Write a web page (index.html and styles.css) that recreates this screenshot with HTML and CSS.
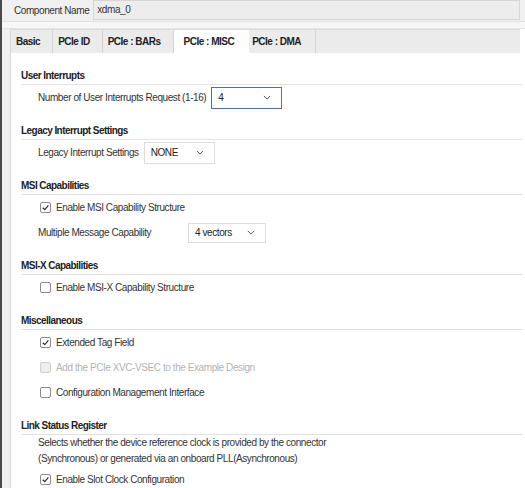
FILE: index.html
```html
<!DOCTYPE html>
<html>
<head>
<meta charset="utf-8">
<link rel="stylesheet" href="styles.css">
</head>
<body>
<div class="frame">
  <div class="name-row">
    <span class="name-label">Component Name</span>
    <div class="name-input">xdma_0</div>
  </div>
  <div class="band"></div>
  <div class="panel">
    <div class="tabs">
      <div class="tab">Basic</div>
      <div class="tab">PCIe ID</div>
      <div class="tab">PCIe : BARs</div>
      <div class="tab active">PCIe : MISC</div>
      <div class="tab">PCIe : DMA</div>
    </div>
    <div class="content">
      <div class="section">
        <div class="sec-title">User Interrupts</div>
        <div class="row">
          <span class="lbl">Number of User Interrupts Request (1-16)</span>
          <div class="select focus w71"><span>4</span><svg class="chev" viewBox="0 0 10 6"><path d="M1 1 L5 5 L9 1" fill="none" stroke="#555" stroke-width="1.2"/></svg></div>
        </div>
      </div>
      <div class="section">
        <div class="sec-title">Legacy Interrupt Settings</div>
        <div class="row">
          <span class="lbl">Legacy Interrupt Settings</span>
          <div class="select w71"><span>NONE</span><svg class="chev" viewBox="0 0 10 6"><path d="M1 1 L5 5 L9 1" fill="none" stroke="#555" stroke-width="1.2"/></svg></div>
        </div>
      </div>
      <div class="section">
        <div class="sec-title">MSI Capabilities</div>
        <label class="check"><span class="box"><svg viewBox="0 0 10 10"><path d="M2 5.2 L4.2 7.4 L8.2 2.6" fill="none" stroke="#333" stroke-width="1.4"/></svg></span>Enable MSI Capability Structure</label>
        <div class="row">
          <span class="lbl fixed">Multiple Message Capability</span>
          <div class="select short w78"><span>4 vectors</span><svg class="chev" viewBox="0 0 10 6"><path d="M1 1 L5 5 L9 1" fill="none" stroke="#555" stroke-width="1.2"/></svg></div>
        </div>
      </div>
      <div class="section">
        <div class="sec-title">MSI-X Capabilities</div>
        <label class="check"><span class="box"></span>Enable MSI-X Capability Structure</label>
      </div>
      <div class="section">
        <div class="sec-title">Miscellaneous</div>
        <label class="check"><span class="box"><svg viewBox="0 0 10 10"><path d="M2 5.2 L4.2 7.4 L8.2 2.6" fill="none" stroke="#333" stroke-width="1.4"/></svg></span>Extended Tag Field</label>
        <label class="check disabled"><span class="box"></span>Add the PCIe XVC-VSEC to the Example Design</label>
        <label class="check"><span class="box"></span>Configuration Management Interface</label>
      </div>
      <div class="section">
        <div class="sec-title">Link Status Register</div>
        <p class="desc">Selects whether the device reference clock is provided by the connector<br>(Synchronous) or generated via an onboard PLL(Asynchronous)</p>
        <label class="check"><span class="box"><svg viewBox="0 0 10 10"><path d="M2 5.2 L4.2 7.4 L8.2 2.6" fill="none" stroke="#333" stroke-width="1.4"/></svg></span>Enable Slot Clock Configuration</label>
      </div>
    </div>
  </div>
</div>
</body>
</html>
```

FILE: styles.css
```css
* { box-sizing: border-box; }
html, body { margin: 0; padding: 0; }
body {
  width: 525px;
  height: 488px;
  overflow: hidden;
  font-family: "Liberation Sans", Arial, sans-serif;
  font-size: 10px;
  letter-spacing: -0.42px;
  color: #222;
  background: #fff;
}
.frame {
  height: 488px;
  border-left: 2px solid #4a4a4a;
  background: #f0f0f0;
  display: flex;
  flex-direction: column;
}
.name-row {
  display: flex;
  flex-shrink: 0;
  align-items: center;
  height: 21px;
  padding-left: 12px;
  gap: 4px;
}
.name-label { color: #333; }
.name-input {
  flex: 1;
  margin-right: 5px;
  height: 20px;
  margin-top: -2px;
  border: 1px solid #d6d6d6;
  background: #ededed;
  padding-left: 3px;
  display: flex;
  align-items: center;
  color: #333;
}
.band {
  height: 8px;
  flex-shrink: 0;
  border-top: 1px solid #e2e2e2;
  border-bottom: 1px solid #e4e4e4;
  background: #f6f6f6;
}
.panel {
  flex: 1;
  min-height: 0;
  margin-left: 8px;
  display: flex;
  flex-direction: column;
  border-left: 1px solid #d8d8d8;
  background: #fff;
}
.tabs {
  display: flex;
  height: 24px;
  flex-shrink: 0;
  background: #ebebeb;
  border-top: 1px solid #dcdcdc;
  margin-right: 5px;
}
.tab {
  font-weight: bold;
  letter-spacing: -0.5px;
  padding: 0 12px 0 5px;
  display: flex;
  align-items: center;
  border-right: 1px solid #d4d4d4;
  color: #222;
}
.tab.active {
  background: #fff;
  border-right: none;
  padding: 0 15px 0 10px;
}
.tab.active + .tab { padding-left: 3px; padding-right: 14px; }
.content {
  flex-shrink: 0;
  padding: 17px 0 0 10px;
  display: flex;
  flex-direction: column;
}
.section { display: flex; flex-direction: column; margin-bottom: 15px; flex-shrink: 0; }
.sec-title {
  font-weight: bold;
  letter-spacing: -0.55px;
  color: #222;
  line-height: 12px;
  padding-bottom: 2px;
  border-bottom: 1px solid #e2e2e2;
  margin-right: 2px;
}
.row {
  display: flex;
  flex-shrink: 0;
  align-items: center;
  padding-left: 17px;
  gap: 5px;
  height: 25px;
}
.lbl { color: #333; }
.lbl.fixed { width: 145px; }
.select {
  height: 22px;
  border: 1px solid #dcdcdc;
  display: flex;
  align-items: center;
  justify-content: space-between;
  padding: 0 10px 0 6px;
  color: #222;
  background: #fff;
}
.select.short { height: 20px; }
.select.focus { border: 1.5px solid #4f6fa8; }
.w71 { width: 71px; }
.w78 { width: 78px; }
.chev { width: 8px; height: 5px; }
.check {
  display: flex;
  flex-shrink: 0;
  align-items: center;
  gap: 5px;
  padding-left: 19px;
  height: 25px;
  color: #333;
}
.box {
  width: 11px;
  height: 11px;
  border: 1px solid #8a8a8a;
  border-radius: 2px;
  background: #fff;
  display: flex;
}
.box svg { width: 100%; height: 100%; }
.check.disabled { color: #b4b4b4; }
.check.disabled .box { border-color: #cfcfcf; background: #eee; }
.desc {
  margin: 0 0 0 17px;
  line-height: 16px;
  color: #333;
}
.desc + .check { height: 24px; }
```
